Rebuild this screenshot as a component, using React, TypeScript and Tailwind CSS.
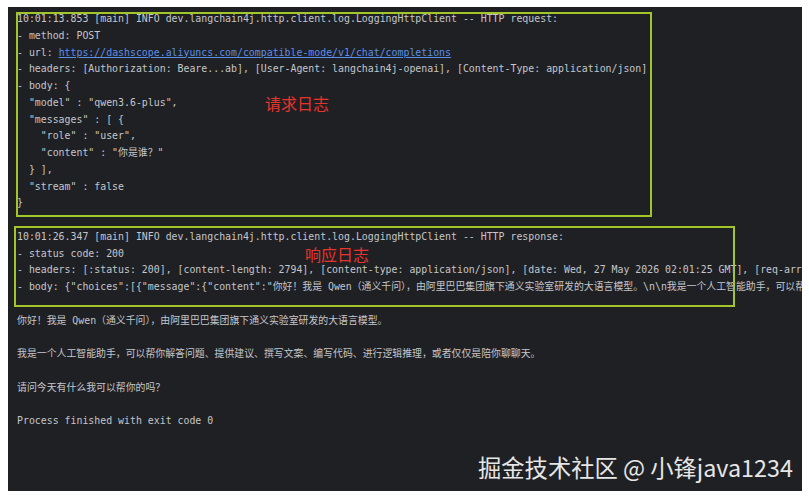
const mono = "font-['DejaVu_Sans_Mono','Noto_Sans_CJK_SC',monospace]";

const requestLines: React.ReactNode[] = [
  "10:01:13.853 [main] INFO dev.langchain4j.http.client.log.LoggingHttpClient -- HTTP request:",
  "- method: POST",
  <>
    {"- url: "}
    <span className="text-[#5b8fe8] underline">https://dashscope.aliyuncs.com/compatible-mode/v1/chat/completions</span>
  </>,
  "- headers: [Authorization: Beare...ab], [User-Agent: langchain4j-openai], [Content-Type: application/json]",
  "- body: {",
  '  "model" : "qwen3.6-plus",',
  '  "messages" : [ {',
  '    "role" : "user",',
  '    "content" : "你是谁？"',
  "  } ],",
  '  "stream" : false',
  "}",
];

const responseLines = [
  "10:01:26.347 [main] INFO dev.langchain4j.http.client.log.LoggingHttpClient -- HTTP response:",
  "- status code: 200",
  "- headers: [:status: 200], [content-length: 2794], [content-type: application/json], [date: Wed, 27 May 2026 02:01:25 GMT], [req-arrive-time: 1779847285000]",
  '- body: {"choices":[{"message":{"content":"你好！我是 Qwen（通义千问），由阿里巴巴集团旗下通义实验室研发的大语言模型。\\n\\n我是一个人工智能助手，可以帮你解答问题"}}]}',
];

const outputLines = [
  "",
  "你好！我是 Qwen（通义千问），由阿里巴巴集团旗下通义实验室研发的大语言模型。",
  "",
  "我是一个人工智能助手，可以帮你解答问题、提供建议、撰写文案、编写代码、进行逻辑推理，或者仅仅是陪你聊聊天。",
  "",
  "请问今天有什么我可以帮你的吗？",
  "",
  "Process finished with exit code 0",
];

function Line({ children }: { children: React.ReactNode }) {
  return <div className="h-[16.78px] leading-[16.78px] whitespace-pre">{children || " "}</div>;
}

export default function App() {
  return (
    <div className="w-[809px] h-[500px] bg-white pt-[7px] pl-[8px]">
      <div className={`relative flex flex-col w-[794px] h-[484px] bg-[#1f2024] overflow-hidden pl-[9px] pt-[4px] text-[9.9px] text-[#c4c6cb] ${mono}`}>
        {requestLines.map((l, i) => (
          <Line key={"q" + i}>{l}</Line>
        ))}
        <Line>{""}</Line>
        {responseLines.map((l, i) => (
          <Line key={"r" + i}>{l}</Line>
        ))}
        {outputLines.map((l, i) => (
          <Line key={"o" + i}>{l}</Line>
        ))}

        {/* annotation boxes */}
        <div className="absolute left-[8px] top-[5px] w-[636px] h-[205px] border-2 border-[#a2c62a]" />
        <div className="absolute left-[6px] top-[219px] w-[721px] h-[81px] border-2 border-[#a2c62a]" />

        <div className="absolute left-[257px] top-[86px] text-[16px] leading-[20px] text-[#e5352d] font-['Noto_Sans_CJK_SC',sans-serif]">
          请求日志
        </div>
        <div className="absolute left-[297px] top-[237px] text-[16px] leading-[20px] text-[#e5352d] font-['Noto_Sans_CJK_SC',sans-serif]">
          响应日志
        </div>

        <div className="absolute left-[470px] top-[445px] text-[23.3px] leading-[30px] text-[#e6e6e6] font-['Noto_Sans_CJK_SC',sans-serif] whitespace-nowrap">
          掘金技术社区 @ 小锋java1234
        </div>
      </div>
    </div>
  );
}
